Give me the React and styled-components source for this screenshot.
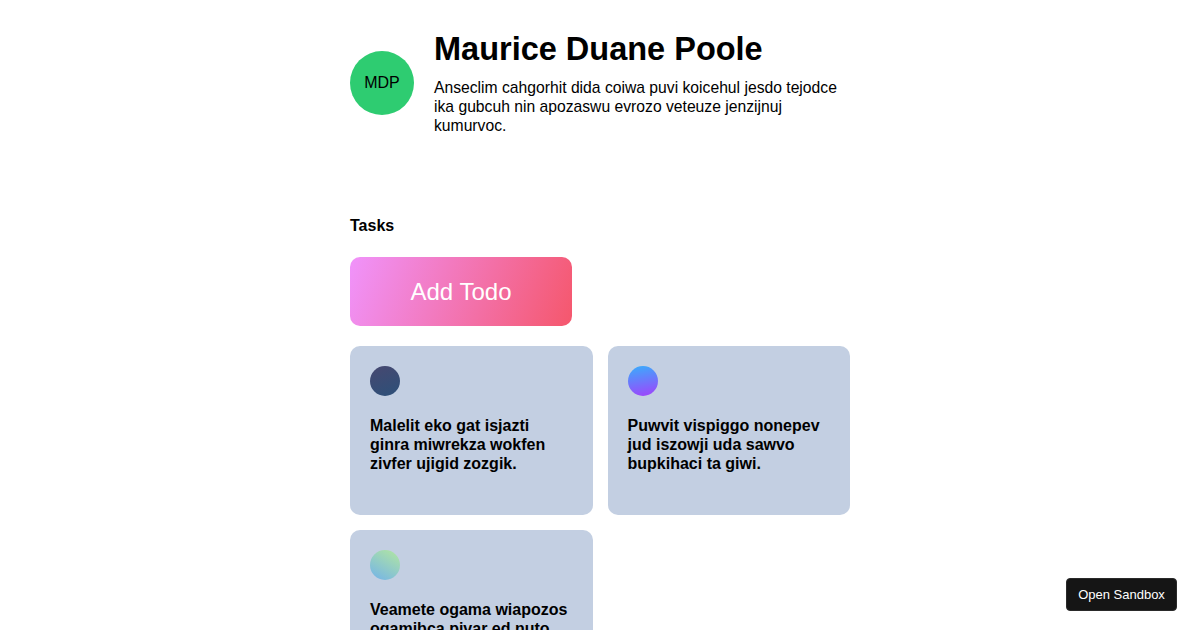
import React from "react";
import styled, { createGlobalStyle } from "styled-components";

const Global = createGlobalStyle`
  html, body { margin: 0; padding: 0; background: #fff; }
  body { font-family: "Liberation Sans", Arial, sans-serif; color: #000; }
`;

const Page = styled.div`
  width: 500px;
  margin: 0 auto;
  padding-top: 31px;
`;

const Header = styled.header`
  display: flex;
  align-items: flex-start;
  gap: 20px;
`;

const Avatar = styled.div`
  flex: 0 0 64px;
  width: 64px;
  height: 64px;
  margin-top: 20px;
  border-radius: 50%;
  background: #2ecc71;
  display: flex;
  align-items: center;
  justify-content: center;
  font-size: 16px;
`;

const Info = styled.div`
  flex: 1;
`;

const Name = styled.h1`
  margin: 0;
  font-size: 32.5px;
  line-height: 37px;
  font-weight: 700;
`;

const Bio = styled.p`
  margin: 10px 0 0;
  font-size: 15.7px;
  line-height: 19px;
`;

const SectionTitle = styled.h3`
  margin: 81px 0 0;
  font-size: 16px;
  line-height: 19px;
  font-weight: 700;
`;

const AddButton = styled.button`
  display: block;
  margin-top: 22px;
  width: 222px;
  height: 69px;
  border: none;
  border-radius: 10px;
  background: linear-gradient(110deg, #f093fb 0%, #f5576c 100%);
  color: #fff;
  font-family: "Liberation Sans", Arial, sans-serif;
  font-size: 24px;
  font-weight: 400;
  cursor: pointer;
`;

const Grid = styled.div`
  display: grid;
  grid-template-columns: 1fr 1fr;
  gap: 15px;
  margin-top: 20px;
`;

const Card = styled.div`
  background: #c3cfe2;
  border-radius: 10px;
  padding: 20px 20px 0;
  height: 169px;
  box-sizing: border-box;
`;

const Dot = styled.div`
  width: 30px;
  height: 30px;
  border-radius: 50%;
  background: ${(p) => p.$bg};
`;

const CardText = styled.p`
  margin: 20px 0 0;
  font-size: 16px;
  line-height: 19px;
  font-weight: 700;
`;

const Sandbox = styled.a`
  position: fixed;
  right: 23px;
  bottom: 19px;
  width: 111px;
  height: 33px;
  box-sizing: border-box;
  background: #151515;
  color: #fff;
  border: 1px solid #2a2a2a;
  border-radius: 4px;
  font-family: "Liberation Sans", Arial, sans-serif;
  font-size: 13px;
  display: flex;
  align-items: center;
  justify-content: center;
  text-decoration: none;
`;

const tasks = [
  {
    bg: "linear-gradient(160deg, #474870 0%, #2c5079 100%)",
    text: "Malelit eko gat isjazti ginra miwrekza wokfen zivfer ujigid zozgik.",
  },
  {
    bg: "linear-gradient(170deg, #38aefc 0%, #a241fc 100%)",
    text: "Puwvit vispiggo nonepev jud iszowji uda sawvo bupkihaci ta giwi.",
  },
  {
    bg: "linear-gradient(30deg, #72b2ea 0%, #b3e7a0 100%)",
    text: "Veamete ogama wiapozos ogamibca pivar ed nuto.",
  },
];

export default function App() {
  return (
    <>
      <Global />
      <Page>
        <Header>
          <Avatar>MDP</Avatar>
          <Info>
            <Name>Maurice Duane Poole</Name>
            <Bio>
              Anseclim cahgorhit dida coiwa puvi koicehul jesdo tejodce ika
              gubcuh nin apozaswu evrozo veteuze jenzijnuj kumurvoc.
            </Bio>
          </Info>
        </Header>
        <SectionTitle>Tasks</SectionTitle>
        <AddButton>Add Todo</AddButton>
        <Grid>
          {tasks.map((t, i) => (
            <Card key={i}>
              <Dot $bg={t.bg} />
              <CardText>{t.text}</CardText>
            </Card>
          ))}
        </Grid>
      </Page>
      <Sandbox href="#">Open Sandbox</Sandbox>
    </>
  );
}
